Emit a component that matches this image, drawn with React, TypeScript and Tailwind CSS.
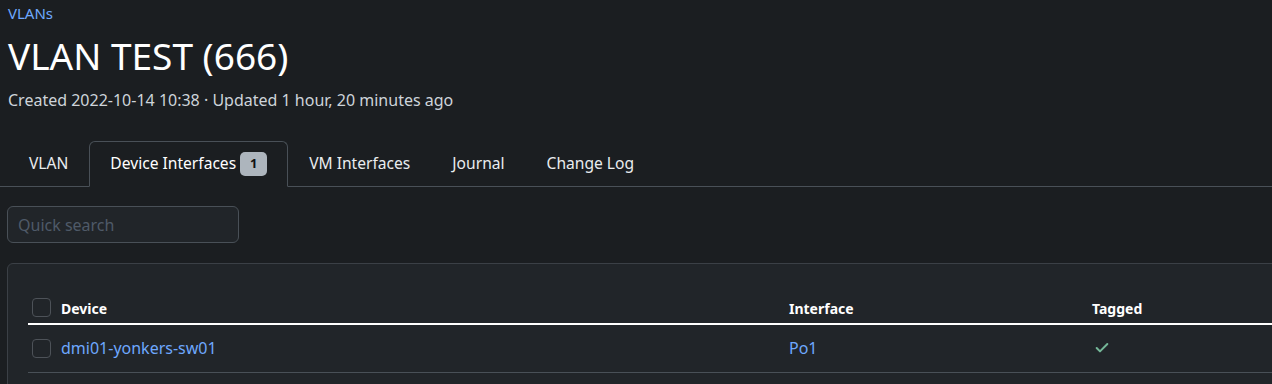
import { Check } from 'lucide-react'

const tabs = [
  { label: 'VLAN' },
  { label: 'Device Interfaces', badge: 1, active: true },
  { label: 'VM Interfaces' },
  { label: 'Journal' },
  { label: 'Change Log' },
]

function Checkbox() {
  return <span className="block w-[19px] h-[19px] rounded-[4px] border border-[#4d5258] bg-[#212529]" />
}

export default function App() {
  return (
    <div className="min-h-screen bg-[#1b1e21] text-[#e9ecef] overflow-hidden" style={{ fontFamily: '"Noto Sans", "Open Sans", sans-serif' }}>
      <div className="px-2 pt-[1px]">
        <a className="text-[15px] text-[#6ea8fe] leading-5">VLANs</a>
        <h1 className="mt-[8px] text-[37px] leading-[46px] text-white">VLAN TEST (666)</h1>
        <p className="mt-[11px] text-[16px] leading-5 text-[#ced4da]">Created 2022-10-14 10:38 · Updated 1 hour, 20 minutes ago</p>
      </div>

      <div className="mt-[31px] flex items-end border-b border-[#495057] h-[46px] pl-2">
        {tabs.map(t => (
          <div key={t.label}
            className={`h-[46px] -mb-px flex items-center gap-[4px] px-5 text-[15.6px] rounded-t-[6px] border ${t.active ? 'border-[#495057] border-b-[#1b1e21] bg-[#1b1e21] text-white' : 'border-transparent text-[#e9ecef]'}`}>
            <span>{t.label}</span>
            {t.badge && (
              <span className="inline-flex items-center justify-center w-[27px] h-[24px] rounded-[5px] bg-[#adb5bd] text-[#111] text-[13px] font-bold">{t.badge}</span>
            )}
          </div>
        ))}
      </div>

      <div className="px-[7px] pt-[19px]">
        <div className="w-[232px] h-[37px] rounded-[6px] border border-[#495057] bg-[#212529] flex items-center px-[10px]">
          <span className="text-[16px] text-[#4f5a68]">Quick search</span>
        </div>
      </div>

      <div className="ml-[7px] mt-[20px] -mr-[21px] rounded-tl-[6px] border border-[#3b4046] bg-[#212529] pt-[34px] px-5 h-[200px]">
        <table className="w-full border-collapse">
          <thead>
            <tr className="border-b-2 border-white">
              <th className="w-[33px] pb-[6px] pl-[4px] text-left align-middle"><Checkbox /></th>
              <th className="pb-[4px] text-left text-[14px] font-bold text-white">Device</th>
              <th className="w-[303px] pb-[4px] text-left text-[14px] font-bold text-white">Interface</th>
              <th className="w-[180px] pb-[4px] text-left text-[14px] font-bold text-white">Tagged</th>
            </tr>
          </thead>
          <tbody>
            <tr className="border-b border-[#495057]">
              <td className="h-[48px] pl-[4px]"><Checkbox /></td>
              <td className="text-[16px] text-[#6ea8fe]">dmi01-yonkers-sw01</td>
              <td className="text-[16px] text-[#6ea8fe]">Po1</td>
              <td><Check size={16} strokeWidth={3} className="text-[#75b798] ml-[2px]" /></td>
            </tr>
          </tbody>
        </table>
      </div>
    </div>
  )
}
